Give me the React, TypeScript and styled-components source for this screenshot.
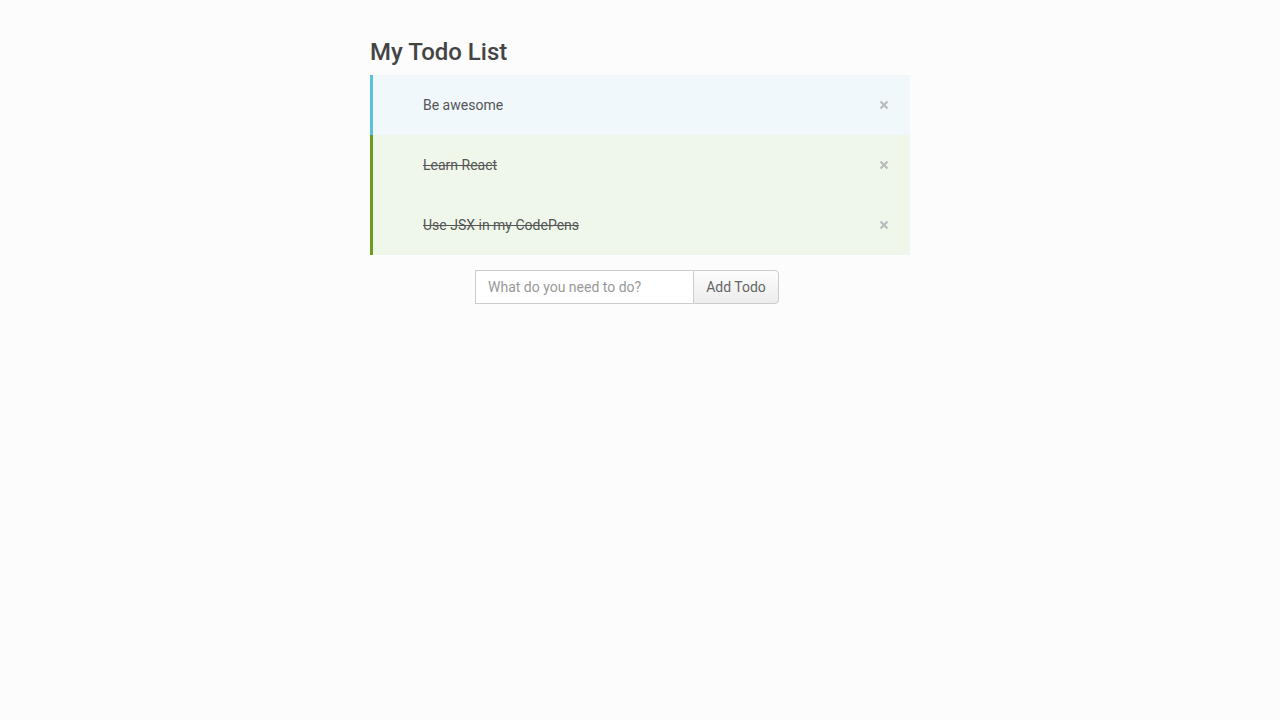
import React from "react";
import styled, { createGlobalStyle } from "styled-components";

const Global = createGlobalStyle`
  html, body { margin: 0; padding: 0; background: #fcfcfc; }
  body { font-family: Roboto, "Liberation Sans", sans-serif; color: #555; }
`;

const Page = styled.div`
  display: flex;
  justify-content: center;
  padding-top: 39px;
`;

const Container = styled.div`
  width: 540px;
  display: flex;
  flex-direction: column;
`;

const Title = styled.h1`
  margin: 0 0 10px 0;
  font-size: 24px;
  line-height: 26px;
  font-weight: 500;
  color: #444;
`;

const List = styled.ul`
  list-style: none;
  margin: 0;
  padding: 0;
`;

const Row = styled.li<{ $done: boolean }>`
  height: 60px;
  display: flex;
  align-items: center;
  box-sizing: border-box;
  padding: 0 21px 0 50px;
  border-left: 3px solid ${(p) => (p.$done ? "#6c9b1d" : "#5bc0de")};
  background: ${(p) => (p.$done ? "#eff7ea" : "#f0f8fc")};
`;

const Label = styled.span<{ $done: boolean }>`
  flex: 1;
  font-size: 14px;
  color: #555;
  text-decoration: ${(p) => (p.$done ? "line-through" : "none")};
`;

const Close = styled.button`
  border: 0;
  background: none;
  padding: 0;
  width: 10px;
  height: 10px;
  display: flex;
  align-items: center;
  justify-content: center;
  cursor: pointer;
`;

const Form = styled.form`
  display: flex;
  justify-content: center;
  margin: 15px 26px 0 0;
`;

const Input = styled.input`
  width: 218px;
  height: 34px;
  box-sizing: border-box;
  border: 1px solid #ccc;
  border-right: 0;
  padding: 0 12px;
  font-family: Roboto, "Liberation Sans", sans-serif;
  font-size: 14px;
  color: #555;
  background: #fff;
  outline: none;
  &::placeholder { color: #999; }
`;

const AddButton = styled.button`
  width: 86px;
  height: 34px;
  box-sizing: border-box;
  border: 1px solid #ccc;
  border-radius: 0 4px 4px 0;
  background: linear-gradient(#fdfdfd, #ececec);
  font-family: Roboto, "Liberation Sans", sans-serif;
  font-size: 14px;
  color: #666;
  padding: 0;
  cursor: pointer;
`;

const XIcon = () => (
  <svg width="10" height="10" viewBox="0 0 10 10">
    <path d="M1.5 1.5 L8.5 8.5 M8.5 1.5 L1.5 8.5" stroke="#b8bcbc" strokeWidth="2.2" strokeLinecap="butt" />
  </svg>
);

const todos = [
  { text: "Be awesome", done: false },
  { text: "Learn React", done: true },
  { text: "Use JSX in my CodePens", done: true },
];

export default function App() {
  return (
    <Page>
      <Global />
      <Container>
        <Title>My Todo List</Title>
        <List>
          {todos.map((t) => (
            <Row key={t.text} $done={t.done}>
              <Label $done={t.done}>{t.text}</Label>
              <Close aria-label="remove">
                <XIcon />
              </Close>
            </Row>
          ))}
        </List>
        <Form onSubmit={(e) => e.preventDefault()}>
          <Input placeholder="What do you need to do?" />
          <AddButton type="submit">Add Todo</AddButton>
        </Form>
      </Container>
    </Page>
  );
}
